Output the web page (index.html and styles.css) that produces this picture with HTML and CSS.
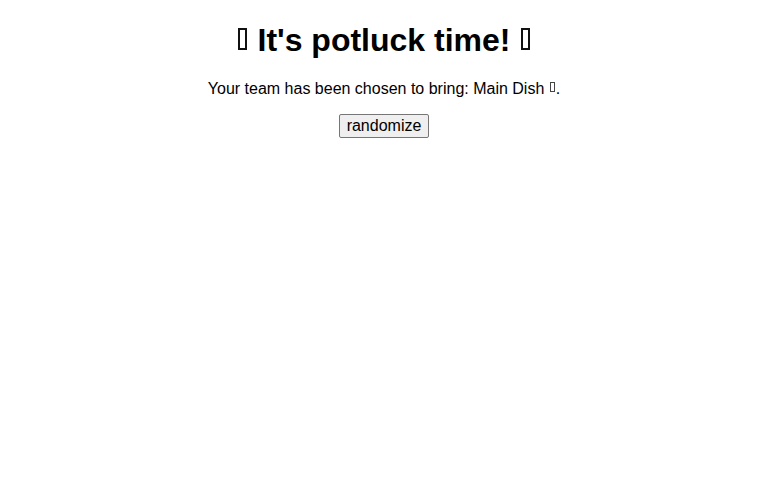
FILE: index.html
```html
<!DOCTYPE html>
<html lang="en">
<head>
    <meta charset="UTF-8">
    <meta name="viewport" content="width=device-width, initial-scale=1.0">
    <title>Potluck</title>
    <link rel="stylesheet" href="styles.css">
</head>
<body>
    <div class="container">
        <h1 class="title"><span class="tofu" aria-label="🥘"></span> It's potluck time! <span class="tofu" aria-label="🍲"></span></h1>
        <p class="message">Your team has been chosen to bring: <span id="dish">Main Dish <span class="tofu tofu-sm" aria-label="🍝"></span></span>.</p>
        <p class="actions">
            <button id="randomize" class="randomize">randomize</button>
        </p>
    </div>
</body>
</html>
```

FILE: styles.css
```css
body {
    font-family: "Liberation Sans", Arial, sans-serif;
    margin: 8px;
    color: #000;
    background-color: #fff;
}

.container {
    text-align: center;
}

.title {
    font-size: 32px;
    margin: 14px 0 21px;
}

.message {
    font-size: 16px;
    margin: 16px 0;
}

/* missing-glyph boxes, as the emoji show up without an emoji font */
.tofu {
    display: inline-block;
    box-sizing: border-box;
    width: 9px;
    height: 22px;
    margin: 0 2px;
    border: 2px solid #111;
    vertical-align: 1px;
}

.tofu-sm {
    width: 5px;
    height: 10px;
    margin: 0 1px;
    border-width: 1px;
    border-color: #444;
    vertical-align: 2px;
}

.actions {
    margin: 16px 0;
}

.randomize {
    font-family: inherit;
    font-size: 16px;
    padding: 2px 7px;
    background-color: #efefef;
    border: 1px solid #767676;
    border-radius: 2px;
    color: #000;
    cursor: pointer;
}
```
